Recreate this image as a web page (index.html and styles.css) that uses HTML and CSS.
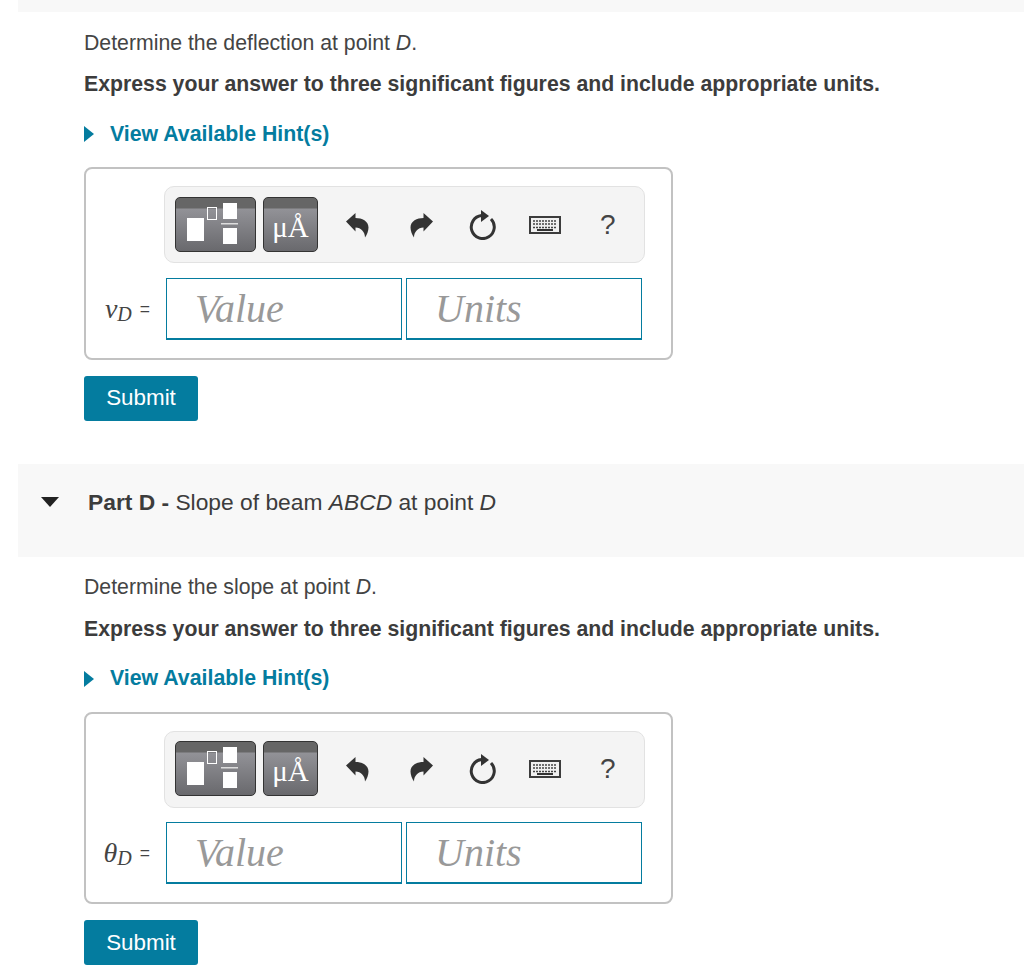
FILE: index.html
```html
<!DOCTYPE html>
<html>
  <head>
    <meta name="viewport" content="width=device-width, initial-scale=1.0">
    <title>Part D - Slope of beam ABCD at point D</title>
    <link rel="stylesheet" href="styles.css">
  </head>
  <body>
    <svg class="defs" width="0" height="0">
      <symbol id="iconTemplate" viewBox="0 0 80 54">
        <rect x="12" y="21" width="17" height="23" fill="#fff"/>
        <rect x="32.5" y="10.5" width="9" height="12" fill="none" stroke="#fff"/>
        <rect x="48" y="6" width="14" height="16" fill="#fff"/>
        <rect x="46" y="26" width="17" height="1.5" fill="#ddd"/>
        <rect x="48" y="31" width="14" height="16" fill="#fff"/>
      </symbol>
      <symbol id="iconUndo" viewBox="0 0 24 26">
        <path d="M0 9.5 9.5 1V6C16 6 22.5 9 22.500 15.500 22.500 19 21 22.500 19 25.500 19 20 15 15.500 9.500 15.500V19.500Z" fill="#333"/>
      </symbol>
      <symbol id="iconRefresh" viewBox="0 0 28 30">
        <path d="M22 9A11.500 11.500 0 1 1 12.500 5.600" fill="none" stroke="#333" stroke-width="3"/>
        <path d="M12 0 20 6 12 12Z" fill="#333"/>
      </symbol>
      <symbol id="iconKeyboard" viewBox="0 0 32 18">
        <rect x="1" y="1" width="30" height="16" fill="#f0f0f0" stroke="#3c3c3c" stroke-width="2"/>
        <path d="M4 5H28M4 8H28M4 11.500H28" stroke="#444" stroke-width="1.500" stroke-dasharray="2 1"/>
        <path d="M8 14H24" stroke="#333" stroke-width="2"/>
      </symbol>
    </svg>

    <div class="strip"></div>

    <div class="partBody">
      <p class="prompt">Determine the deflection at point <i>D</i>.</p>
      <p class="instr">Express your answer to three significant figures and include appropriate units.</p>
      <a class="hint" href="#"><span class="arrowRight"></span>View Available Hint(s)</a>
      <div class="answerBox">
        <div class="toolbar">
          <div class="tplBtn tplWide"><svg width="80" height="54"><use href="#iconTemplate"/></svg></div>
          <div class="tplBtn tplUnit"><span>μÅ</span></div>
          <svg class="tool undo" width="24" height="26"><use href="#iconUndo"/></svg>
          <svg class="tool redo" width="24" height="26"><use href="#iconUndo"/></svg>
          <svg class="tool refresh" width="28" height="30"><use href="#iconRefresh"/></svg>
          <svg class="tool keyboard" width="32" height="18"><use href="#iconKeyboard"/></svg>
          <span class="help">?</span>
        </div>
        <div class="inputRow">
          <label class="varName"><i>v<sub>D</sub></i><span class="eq">=</span></label>
          <input class="field" type="text" placeholder="Value">
          <input class="field" type="text" placeholder="Units">
        </div>
      </div>
      <button class="submit">Submit</button>
    </div>

    <div class="partHead">
      <span class="arrowDown"></span>
      <h3><b>Part D -</b> Slope of beam <i>ABCD</i> at point <i>D</i></h3>
    </div>

    <div class="partBody">
      <p class="prompt">Determine the slope at point <i>D</i>.</p>
      <p class="instr">Express your answer to three significant figures and include appropriate units.</p>
      <a class="hint" href="#"><span class="arrowRight"></span>View Available Hint(s)</a>
      <div class="answerBox">
        <div class="toolbar">
          <div class="tplBtn tplWide"><svg width="80" height="54"><use href="#iconTemplate"/></svg></div>
          <div class="tplBtn tplUnit"><span>μÅ</span></div>
          <svg class="tool undo" width="24" height="26"><use href="#iconUndo"/></svg>
          <svg class="tool redo" width="24" height="26"><use href="#iconUndo"/></svg>
          <svg class="tool refresh" width="28" height="30"><use href="#iconRefresh"/></svg>
          <svg class="tool keyboard" width="32" height="18"><use href="#iconKeyboard"/></svg>
          <span class="help">?</span>
        </div>
        <div class="inputRow">
          <label class="varName"><i>θ<sub>D</sub></i><span class="eq">=</span></label>
          <input class="field" type="text" placeholder="Value">
          <input class="field" type="text" placeholder="Units">
        </div>
      </div>
      <button class="submit">Submit</button>
    </div>
  </body>
</html>
```

FILE: styles.css
```css
html {
  color: #444;
  font-size: 21.25px;
  font-family: 'Liberation Sans', Arial, sans-serif;
  background-color: #fff;
}
body {
  margin: 0;
  padding: 0;
  height: 976px;
  overflow: hidden;
}
.defs {
  position: absolute;
}
.strip {
  height: 12px;
  margin: 0 0 .6px 18px;
  background-color: #f8f8f8;
}
.partBody {
  padding: 18px 0 0 84px;
}
.prompt,
.instr {
  margin: 0;
  line-height: 25px;
}
.instr {
  margin-top: 16.8px;
  font-weight: bold;
  color: #3c3c3c;
}
.hint {
  display: flex;
  align-items: center;
  height: 25px;
  margin-top: 24.4px;
  font-weight: bold;
  font-size: 21.3px;
  color: #047c9f;
  text-decoration: none;
}
.arrowRight {
  width: 0;
  height: 0;
  margin-right: 16px;
  border-left: 10px solid #047c9f;
  border-top: 8.5px solid transparent;
  border-bottom: 8.5px solid transparent;
}
.answerBox {
  box-sizing: border-box;
  width: 589px;
  height: 192.6px;
  margin-top: 20.4px;
  padding: 17px 0 0 78px;
  border: 2px solid #c2c2c2;
  border-radius: 8px;
}
.toolbar {
  box-sizing: border-box;
  display: flex;
  align-items: center;
  width: 481px;
  height: 77px;
  padding-left: 10px;
  background-color: #f4f4f4;
  border: 1px solid #e2e2e2;
  border-radius: 10px;
}
.tplBtn {
  box-sizing: border-box;
  height: 55px;
  margin-top: -1px;
  border: 1px solid #333;
  border-radius: 5px;
  background: linear-gradient(#666 0, #666 10px, #929297 11px, #69696d 100%);
  color: #fff;
}
.tplBtn svg {
  display: block;
  margin: -1px;
}
.tplWide {
  width: 81px;
  margin-right: 7px;
}
.tplUnit {
  width: 55px;
  text-align: center;
  font-family: 'Liberation Serif', serif;
  font-size: 29px;
  line-height: 58px;
}
.tool {
  flex: none;
}
.undo {
  margin-left: 28px;
}
.redo {
  margin-left: 39px;
  transform: scaleX(-1);
}
.refresh {
  margin-left: 36px;
}
.keyboard {
  margin-left: 32px;
}
.help {
  margin-left: 39px;
  font-size: 28px;
  color: #444;
}
.inputRow {
  display: flex;
  align-items: center;
  margin-top: 14.6px;
  margin-left: -78px;
}
.varName {
  box-sizing: border-box;
  width: 80px;
  padding-right: 16px;
  font-family: 'Liberation Serif', serif;
  font-size: 28px;
  line-height: 30px;
  text-align: right;
  white-space: nowrap;
}
.varName sub {
  font-size: 20px;
  line-height: 0;
  vertical-align: -3px;
}
.eq {
  margin-left: 8px;
  font-family: 'Liberation Sans', sans-serif;
  font-size: 17.5px;
  vertical-align: 3px;
}
.field {
  box-sizing: border-box;
  width: 236px;
  height: 62px;
  margin: 0 4px 0 0;
  padding: 0 0 0 28px;
  border: 1px solid #047c9f;
  border-bottom-width: 2px;
  border-radius: 0;
  outline: 0;
  background-color: #fff;
  font-family: 'Liberation Serif', serif;
  font-size: 40px;
  font-style: italic;
}
.field::placeholder {
  color: #999;
  opacity: 1;
}
.submit {
  display: block;
  width: 114px;
  height: 45px;
  margin: 16px 0 0;
  padding: 0;
  border: 0;
  border-radius: 3px;
  background-color: #047c9f;
  color: #fff;
  font-family: inherit;
  font-size: 22.4px;
}
.partHead {
  display: flex;
  align-items: flex-start;
  height: 93px;
  margin: 43.2px 0 0 18px;
  background-color: #f8f8f8;
}
.partHead h3 {
  margin: 26px 0 0 29px;
  font-size: 22.8px;
  font-weight: normal;
  line-height: 25px;
  color: #3c3c3c;
}
.arrowDown {
  width: 0;
  height: 0;
  margin: 33px 0 0 23px;
  border-top: 10px solid #222;
  border-left: 9.5px solid transparent;
  border-right: 9.5px solid transparent;
}
```
